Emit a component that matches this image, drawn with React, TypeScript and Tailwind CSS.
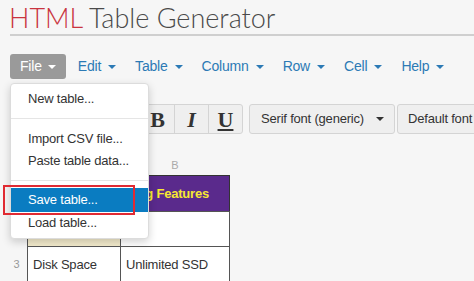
import React from 'react';

const menus = ['Edit', 'Table', 'Column', 'Row', 'Cell', 'Help'];

const Caret = ({ className }: { className?: string }) => (
    <span className={`inline-block shrink-0 w-0 h-0 border-l-[4px] border-r-[4px] border-t-[4px] border-l-transparent border-r-transparent ${className || ''}`} />
);

export default function App() {
    return (
        <div className="relative w-[474px] h-[281px] overflow-hidden bg-[#f6f6f6] text-[#333]" style={{ fontFamily: '"Liberation Sans", Arial, sans-serif' }}>
            {/* header */}
            <div className="pl-[9px] pt-[1px] h-[34px] text-[27px] leading-[34px] font-light whitespace-nowrap" style={{ fontFamily: 'Lato, "Noto Sans", sans-serif' }}>
                <span className="text-[#c9343f]">HTML</span> <span className="text-[#4a4a4a]">Table Generator</span>
            </div>
            <div className="ml-[10px] h-[2px] bg-[#cfcfcf]" />

            {/* menubar */}
            <div className="flex items-center mt-[18px] pl-[10px] h-[25px] text-[14px] tracking-[-0.2px] whitespace-nowrap">
                <div className="flex shrink-0 items-center gap-[6px] h-[25px] px-[10px] rounded-[3px] bg-[#9a9a9a] text-white">
                    File <Caret className="border-t-white" />
                </div>
                <div className="flex shrink-0 items-center gap-[19px] ml-[12px] text-[#2c7ab5]">
                    {menus.map((m) => (
                        <span key={m} className="flex items-center gap-[7px]">
                            {m} <Caret className="border-t-[#2c7ab5]" />
                        </span>
                    ))}
                </div>
            </div>

            {/* toolbar */}
            <div className="flex items-center mt-[25px] pl-[105px] h-[30px] whitespace-nowrap">
                <div className="flex shrink-0 h-[30px] rounded-[3px] border border-[#d4d4d4] bg-[#efefef] overflow-hidden" style={{ fontFamily: '"Liberation Serif", "Times New Roman", serif' }}>
                    {['', 'B', 'I', 'U'].map((b, i) => (
                        <div key={i} className={`w-[34px] flex items-center justify-center text-[22px] text-[#333] ${i > 0 ? 'border-l border-[#d4d4d4]' : ''} ${b === 'B' ? 'font-bold' : ''} ${b === 'I' ? 'italic font-bold' : ''} ${b === 'U' ? 'underline font-bold' : ''}`}>
                            {b}
                        </div>
                    ))}
                </div>
                <div className="flex shrink-0 items-center justify-between ml-[6px] w-[146px] h-[30px] pl-[11px] pr-[10px] rounded-[3px] border border-[#d4d4d4] bg-[#efefef] text-[13px] tracking-[-0.2px]">
                    <span>Serif font (generic)</span>
                    <Caret className="border-t-[#333]" />
                </div>
                <div className="flex shrink-0 items-center ml-[2px] w-[90px] h-[30px] pl-[10px] rounded-[3px] border border-[#d4d4d4] bg-[#efefef] text-[13px] tracking-[-0.2px]">
                    Default font
                </div>
            </div>

            {/* column letters */}
            <div className="flex mt-[23px] h-[18px] text-[11px] text-[#aaa]">
                <div className="w-[120px]" />
                <div className="w-[110px] text-center">B</div>
            </div>

            {/* table */}
            <div className="flex flex-col text-[13px] tracking-[-0.2px]">
                <div className="flex h-[36px]">
                    <div className="w-[27px]" />
                    <div className="w-[93px] bg-[#5a2a8c] border-l border-t border-[#333]" />
                    <div className="w-[110px] flex items-center justify-end pr-[20px] bg-[#5a2a8c] border-l border-r border-t border-[#333] font-bold text-[#f6e832] whitespace-nowrap">
                        Hosting Features
                    </div>
                </div>
                <div className="flex h-[35px]">
                    <div className="w-[27px]" />
                    <div className="w-[93px] bg-[#f3ebcc] border-l border-t border-[#555]" />
                    <div className="w-[110px] bg-white border-l border-r border-t border-[#555]" />
                </div>
                <div className="flex h-[36px]">
                    <div className="w-[27px] flex items-center justify-center pl-[6px] text-[11px] text-[#999]">3</div>
                    <div className="w-[93px] flex items-center pl-[5px] bg-white border-l border-t border-[#555]">Disk Space</div>
                    <div className="w-[110px] flex items-center pl-[5px] bg-white border-l border-r border-t border-[#555]">Unlimited SSD</div>
                </div>
            </div>

            {/* file dropdown */}
            <div className="absolute left-[10px] top-[83px] w-[139px] h-[156px] pt-[4px] rounded-[4px] bg-white border border-[#dcdcdc] shadow-[0_3px_8px_rgba(0,0,0,0.18)] text-[13px] tracking-[-0.2px] text-[#333]">
                <div className="h-[22px] leading-[22px] pl-[17px]">New table...</div>
                <div className="mt-[8px] mb-[9px] h-px bg-[#e5e5e5]" />
                <div className="h-[22px] leading-[22px] pl-[17px]">Import CSV file...</div>
                <div className="h-[22px] leading-[22px] pl-[17px]">Paste table data...</div>
                <div className="mt-[8px] mb-[7px] h-px bg-[#e5e5e5]" />
                <div className="h-[24px] leading-[24px] pl-[17px] bg-[#0a7cc1] text-white">Save table...</div>
                <div className="h-[22px] leading-[22px] pl-[17px]">Load table...</div>
            </div>

            {/* highlight annotation */}
            <div className="absolute left-[3px] top-[185px] w-[132px] h-[30px] border-2 border-[#e02a32]" />
        </div>
    );
}
